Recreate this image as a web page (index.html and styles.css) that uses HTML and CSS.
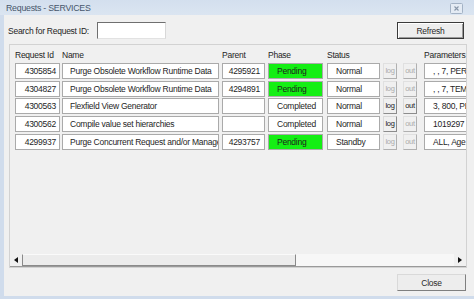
FILE: index.html
```html
<!DOCTYPE html>
<html lang="en">

<head>
    <meta charset="UTF-8">
    <meta name="viewport" content="width=device-width, initial-scale=1.0">
    <title>Requests - SERVICES</title>
    <link rel="stylesheet" href="styles.css">
</head>

<body>
    <div class="window">
        <div class="titlebar">
            <span class="title">Requests - SERVICES</span>
            <span class="title-close">
                <svg width="13" height="11" viewBox="0 0 13 11">
                    <rect x="0.5" y="0.5" width="12" height="10" rx="1" fill="#e4ebf4" stroke="#a3b2c5" />
                    <path d="M4.5 3.5 L8.5 7.5 M8.5 3.5 L4.5 7.5" stroke="#8796a9" stroke-width="1.1" fill="none" />
                </svg>
            </span>
        </div>
        <div class="frame">
            <div class="toolbar">
                <label class="search-label" for="search">Search for Request ID:</label>
                <input type="text" id="search" class="search-input">
                <button class="btn btn-default">Refresh</button>
            </div>
            <div class="panel">
                <div class="list" id="list">
                    <div class="row head">
                        <span class="c-id">Request Id</span>
                        <span class="c-name">Name</span>
                        <span class="c-parent">Parent</span>
                        <span class="c-phase">Phase</span>
                        <span class="c-status">Status</span>
                        <span class="c-log"></span>
                        <span class="c-out"></span>
                        <span class="c-params">Parameters</span>
                    </div>
                </div>
                <div class="hscroll">
                    <span class="scroll-btn">
                        <svg width="4" height="6" viewBox="0 0 4 6"><path d="M4 0 L0 3 L4 6 Z" fill="#111" /></svg>
                    </span>
                    <span class="scroll-thumb"></span>
                    <span class="scroll-track"></span>
                    <span class="scroll-btn">
                        <svg width="4" height="6" viewBox="0 0 4 6"><path d="M0 0 L4 3 L0 6 Z" fill="#111" /></svg>
                    </span>
                </div>
            </div>
            <div class="footer">
                <button class="btn">Close</button>
            </div>
        </div>
    </div>
    <script>
        const requests = [
            { id: "4305854", name: "Purge Obsolete Workflow Runtime Data", parent: "4295921", phase: "Pending", status: "Normal", log: false, out: false, params: ", , 7, PERMANENT, 500" },
            { id: "4304827", name: "Purge Obsolete Workflow Runtime Data", parent: "4294891", phase: "Pending", status: "Normal", log: false, out: false, params: ", , 7, TEMP, 500" },
            { id: "4300563", name: "Flexfield View Generator", parent: "", phase: "Completed", status: "Normal", log: true, out: true, params: "3, 800, PERIOD" },
            { id: "4300562", name: "Compile value set hierarchies", parent: "", phase: "Completed", status: "Normal", log: true, out: false, params: "1019297" },
            { id: "4299937", name: "Purge Concurrent Request and/or Manager Data", parent: "4293757", phase: "Pending", status: "Standby", log: false, out: false, params: "ALL, Age, 30" }
        ];

        const list = document.querySelector("#list");
        for (const r of requests) {
            list.innerHTML += `
            <div class="row">
                <span class="cell c-id">${r.id}</span>
                <span class="cell c-name">${r.name}</span>
                <span class="cell c-parent">${r.parent}</span>
                <span class="cell c-phase ${r.phase === "Pending" ? "pending" : ""}">${r.phase}</span>
                <span class="cell c-status">${r.status}</span>
                <span class="mini c-log ${r.log ? "" : "off"}">log</span>
                <span class="mini c-out ${r.out ? "" : "off"}">out</span>
                <span class="cell c-params">${r.params}</span>
            </div>`;
        }
    </script>
</body>

</html>
```

FILE: styles.css
```css
* {
    box-sizing: border-box;
}

body {
    margin: 0;
    font-family: "Liberation Sans", Arial, sans-serif;
    font-size: 8.5px;
    letter-spacing: -0.25px;
    color: #1e1e1e;
}

.window {
    width: 474px;
    height: 299px;
    background: #d0dcec;
    display: flex;
    flex-direction: column;
}

.titlebar {
    height: 15px;
    display: flex;
    align-items: center;
    padding: 0 11px 0 6px;
    background: linear-gradient(#d3dfee, #dbe5f1);
}

.title {
    color: #46566b;
    font-size: 8.8px;
}

.title-close {
    margin-left: auto;
    display: flex;
    padding-top: 1px;
}

.frame {
    flex: 1;
    margin: 0 0 3px 4px;
    background: #f0f0f0;
    display: flex;
    flex-direction: column;
}

.toolbar {
    display: flex;
    align-items: center;
    padding: 7px 10px 0 4px;
}

.search-label {
    width: 89px;
}

.search-input {
    width: 69px;
    height: 17px;
    margin: 0;
    border: 1px solid;
    border-color: #6f6f6f #d8d8d8 #e2e2e2 #6f6f6f;
    background: #fff;
}

.btn {
    width: 69px;
    height: 17px;
    padding: 0;
    font-family: inherit;
    font-size: inherit;
    letter-spacing: inherit;
    color: #2a2a2a;
    background: #ededed;
    border: 1px solid;
    border-color: #d9d9d9 #7f7f7f #7f7f7f #d9d9d9;
}

.btn-default {
    width: 67px;
    margin-left: auto;
    border-color: #3a3a3a;
    box-shadow: inset 1px 1px #fff, inset -1px -1px #9a9a9a;
}

.panel {
    margin: 5px 7px 0 5px;
    height: 224px;
    border: 1px solid #d2d2d2;
    display: flex;
    flex-direction: column;
    overflow: hidden;
}

.list {
    flex: 1;
    overflow: hidden;
    padding: 5px 0 0 5px;
}

.row {
    display: flex;
    height: 16px;
    margin-bottom: 1.7px;
    white-space: nowrap;
}

.row.head {
    height: 10px;
    line-height: 10px;
    margin-bottom: 3px;
}

.row span {
    flex: none;
    overflow: hidden;
}

.cell {
    line-height: 14px;
    background: #fff;
    border: 1px solid #aaaaaa;
}

.c-id {
    width: 45px;
    margin-right: 2px;
}

.c-name {
    width: 157px;
    margin-right: 3px;
}

.c-parent {
    width: 43px;
    margin-right: 3px;
}

.c-phase {
    width: 55px;
    margin-right: 4px;
}

.c-status {
    width: 53px;
    margin-right: 3px;
}

.c-log {
    width: 14px;
    margin-right: 6px;
}

.c-out {
    width: 14px;
    margin-right: 7px;
}

.c-params {
    width: 90px;
}

.cell.c-id {
    text-align: right;
    padding-right: 3px;
}

.cell.c-name {
    padding-left: 7px;
}

.cell.c-parent {
    text-align: right;
    padding-right: 4px;
}

.cell.c-phase,
.cell.c-status,
.cell.c-params {
    padding-left: 8px;
}

.cell.pending {
    background: #14ef14;
}

.mini {
    font-size: 7.5px;
    letter-spacing: -0.3px;
    line-height: 14px;
    text-align: center;
    color: #222;
    background: #f0f0f0;
    border: 1px solid;
    border-color: #dadada #8c8c8c #8c8c8c #dadada;
}

.mini.off {
    color: #ababab;
    border-color: #e0e0e0 #b0b0b0 #b0b0b0 #e0e0e0;
}

.hscroll {
    display: flex;
    height: 13px;
    border-bottom: 1px solid #9a9a9a;
    background: #f7f7f7;
}

.scroll-btn {
    width: 12px;
    display: flex;
    align-items: center;
    justify-content: center;
    background: #f0f0f0;
}

.scroll-thumb {
    width: 274px;
    background: #ececec;
    border: 1px solid;
    border-color: #fafafa #8a8a8a #8a8a8a #8a8a8a;
}

.scroll-track {
    flex: 1;
}

.footer {
    display: flex;
    justify-content: flex-end;
    padding: 6px 8px 0 0;
}
```
